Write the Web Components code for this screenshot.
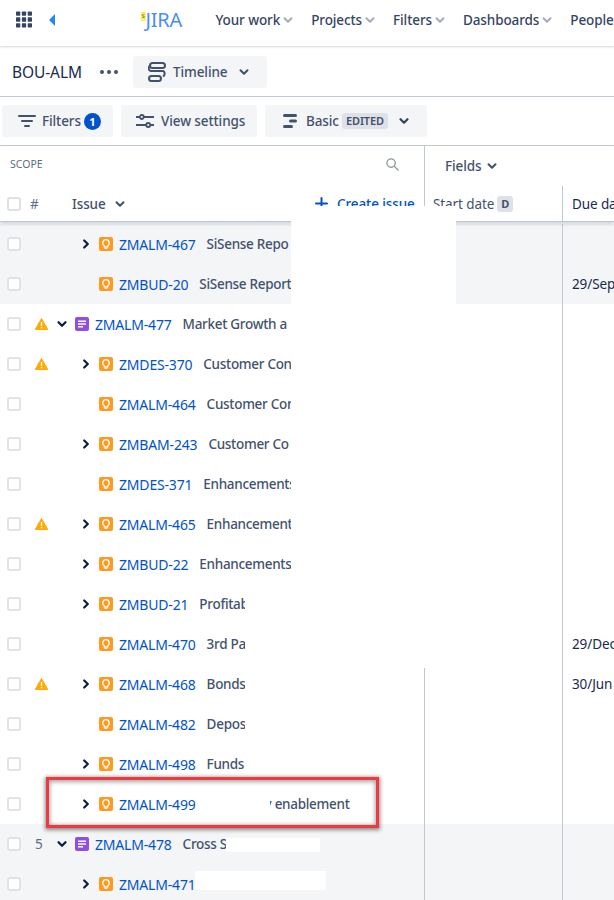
<!DOCTYPE html>
<html>
<head>
<meta charset="utf-8">
<title>Timeline</title>
<style>
    html, body { margin: 0; padding: 0; background: #fff; }
    body { font-family: "Noto Sans", "Open Sans", sans-serif; font-size: 13.5px; letter-spacing: -.1px; color: #42526e; width: 614px; height: 900px; overflow: hidden; }
</style>
</head>
<body>
<timeline-page>
    <top-nav></top-nav>
    <project-bar></project-bar>
    <tool-bar></tool-bar>
    <scope-header></scope-header>

    <issue-row key="ZMALM-467" type="idea" level="1" toggle="right" shade due="">SiSense Repo</issue-row>
    <issue-row key="ZMBUD-20" type="idea" level="1" shade due="29/Sep">SiSense Report</issue-row>
    <issue-row key="ZMALM-477" type="epic" toggle="down" warn>Market Growth a</issue-row>
    <issue-row key="ZMDES-370" type="idea" level="1" toggle="right" warn>Customer Con</issue-row>
    <issue-row key="ZMALM-464" type="idea" level="1">Customer Con</issue-row>
    <issue-row key="ZMBAM-243" type="idea" level="1" toggle="right">Customer Co</issue-row>
    <issue-row key="ZMDES-371" type="idea" level="1">Enhancements</issue-row>
    <issue-row key="ZMALM-465" type="idea" level="1" toggle="right" warn>Enhancement</issue-row>
    <issue-row key="ZMBUD-22" type="idea" level="1" toggle="right">Enhancements</issue-row>
    <issue-row key="ZMBUD-21" type="idea" level="1" toggle="right">Profitab</issue-row>
    <issue-row key="ZMALM-470" type="idea" level="1" due="29/Dec">3rd Pa</issue-row>
    <issue-row key="ZMALM-468" type="idea" level="1" toggle="right" warn due="30/Jun">Bonds</issue-row>
    <issue-row key="ZMALM-482" type="idea" level="1">Depos</issue-row>
    <issue-row key="ZMALM-498" type="idea" level="1" toggle="right">Funds</issue-row>
    <issue-row key="ZMALM-499" type="idea" level="1" toggle="right"><span style="margin-left:58px">y enablement</span></issue-row>
    <issue-row key="ZMALM-478" type="epic" toggle="down" shade count="5">Cross S</issue-row>
    <issue-row key="ZMALM-471" type="idea" level="1" toggle="right" shade></issue-row>

    <!-- white paint-outs from the original screenshot -->
    <redact-box style="left:291px;top:206px;width:165px;height:462px"></redact-box>
    <redact-box style="left:245px;top:590px;width:167px;height:180px"></redact-box>
    <redact-box style="left:195px;top:871px;width:131px;height:19px"></redact-box>
    <redact-box style="left:197px;top:792px;width:73px;height:24px"></redact-box>
    <redact-box style="left:226px;top:838px;width:94px;height:14px"></redact-box>

    <call-out style="left:46px;top:777px;width:333px;height:51px"></call-out>
</timeline-page>

<script>
    const chevron = (size, color, width) => `<svg width="${size}" height="${size}" viewBox="0 0 12 12" fill="none" stroke="${color}" stroke-width="${width}" stroke-linecap="round" stroke-linejoin="round"><path d="M2.5 4.2 6 7.8l3.5-3.6"/></svg>`;

    class TimelinePage extends HTMLElement {
        constructor() {
            super();
            this.attachShadow({ mode: "open" }).innerHTML = `
                <style>
                    :host { display: flex; flex-direction: column; position: relative; width: 614px; height: 900px; overflow: hidden; background: #fff; }
                </style>
                <slot></slot>`;
        }
    }

    class TopNav extends HTMLElement {
        constructor() {
            super();
            const items = ["Your work", "Projects", "Filters", "Dashboards", "People"];
            const links = items.map((name) => `<span class="item">${name}${chevron(12, "#a5adba", 2)}</span>`).join("");
            let dots = "";
            for(let y = 0; y < 3; y++) {
                for(let x = 0; x < 3; x++) {
                    dots += `<rect x="${x * 6}" y="${y * 6}" width="4.4" height="4.4" rx=".7"/>`;
                }
            }
            this.attachShadow({ mode: "open" }).innerHTML = `
                <style>
                    :host { display: flex; align-items: center; height: 46px; flex: none; padding: 0 0 7px 16px; box-sizing: border-box; white-space: nowrap; box-shadow: 0 1px 2px rgba(9, 30, 66, .18); color: #344563; font-weight: 500; position: relative; }
                    svg { display: block; flex: none; }
                    .grid { fill: #344563; }
                    .back { margin-left: 16.5px; }
                    .logo { display: flex; align-items: center; margin-left: 86px; width: 75px; flex: none; font-weight: 400; font-size: 20px; letter-spacing: -.2px; color: #4c8df5; }
                    .logo b { font-size: 6px; font-weight: 400; background: #f7ef6a; color: #6b6b00; width: 5px; height: 9px; line-height: 9px; margin-bottom: 6px; text-align: center; display: block; }
                    .links { display: flex; gap: 17px; flex: none; }
                    .item { display: flex; align-items: center; gap: 2px; }
                </style>
                <svg class="grid" width="16" height="17" viewBox="0 0 16.4 16.4">${dots}</svg>
                <svg class="back" width="6" height="12" viewBox="0 0 6 12"><path d="M6 0v12L0 6z" fill="#2684ff"/></svg>
                <div class="logo"><b>S</b>JIRA</div>
                <div class="links">${links}</div>`;
        }
    }

    class ProjectBar extends HTMLElement {
        constructor() {
            super();
            this.attachShadow({ mode: "open" }).innerHTML = `
                <style>
                    :host { display: flex; align-items: center; height: 51px; flex: none; box-sizing: border-box; border-bottom: 1px solid #c1c7d0; padding: 1px 0 0 12px; }
                    .name { font-size: 15.5px; color: #172b4d; width: 88px; }
                    .more { display: flex; gap: 3px; width: 33px; }
                    .more i { width: 4px; height: 4px; border-radius: 50%; background: #42526e; }
                    .view { display: flex; align-items: center; height: 32px; width: 134px; box-sizing: border-box; padding-left: 15px; background: #f4f5f7; border-radius: 3px; font-weight: 500; color: #42526e; }
                    svg { display: block; flex: none; }
                    .view svg.glyph { margin-right: 7px; }
                    .view span { width: 65px; }
                </style>
                <span class="name">BOU-ALM</span>
                <span class="more"><i></i><i></i><i></i></span>
                <div class="view">
                    <svg class="glyph" width="18" height="20" viewBox="0 0 18 20" fill="none" stroke="#42526e" stroke-width="2"><rect x="2" y="1" width="15" height="5" rx="2.500"/><path d="M2 3.500c-2 2-1.500 5 1 5.500h12c2 .5 2.500 4 0 5.500"/><rect x="1" y="14" width="12" height="5" rx="2.500"/></svg>
                    <span>Timeline</span>
                    ${chevron(12, "#42526e", 2)}
                </div>`;
        }
    }

    class ToolBar extends HTMLElement {
        constructor() {
            super();
            this.attachShadow({ mode: "open" }).innerHTML = `
                <style>
                    :host { display: flex; gap: 8px; align-items: center; height: 49px; flex: none; box-sizing: border-box; border-bottom: 1px solid #c1c7d0; padding-left: 2px; }
                    .btn { display: flex; align-items: center; height: 32px; box-sizing: border-box; background: #f4f5f7; border-radius: 3px; font-weight: 500; color: #42526e; white-space: nowrap; }
                    .count { display: block; width: 17px; height: 17px; line-height: 17px; margin-left: 3px; border-radius: 50%; background: #0052cc; color: #fff; font-size: 11px; font-weight: 700; text-align: center; }
                    .tag { background: #dfe1e6; color: #42526e; font-size: 11px; font-weight: 600; border-radius: 3px; height: 16px; line-height: 16px; padding: 0 4px; margin: 0 10px 0 3px; }
                    svg { display: block; flex: none; }
                </style>
                <div class="btn" style="width:111px;padding-left:16px">
                    <svg width="18" height="12" viewBox="0 0 18 12" fill="#42526e" style="margin-right:6px"><rect width="18" height="2" rx="1"/><rect x="3" y="5" width="12" height="2" rx="1"/><rect x="6" y="10" width="6" height="2" rx="1"/></svg>
                    Filters<span class="count">1</span>
                </div>
                <div class="btn" style="width:136px;padding-left:15px">
                    <svg width="18" height="14" viewBox="0 0 18 14" fill="none" stroke="#42526e" stroke-width="1.800" style="margin-right:7px"><path d="M0 3h3.500M8 3h10M0 11h10M14.500 11H18"/><circle cx="5.800" cy="3" r="2"/><circle cx="12.200" cy="11" r="2"/></svg>
                    View settings
                </div>
                <div class="btn" style="width:162px;padding-left:17px">
                    <svg width="15" height="14" viewBox="0 0 15 14" fill="#42526e" style="margin-right:9px"><rect x="1" width="14" height="3" rx="1.500"/><rect x="7" y="5.500" width="8" height="3" rx="1.500"/><rect x="1" y="11" width="10" height="3" rx="1.500"/></svg>
                    Basic<span class="tag">EDITED</span>
                    ${chevron(12, "#344563", 2.2)}
                </div>`;
        }
    }

    class ScopeHeader extends HTMLElement {
        constructor() {
            super();
            this.attachShadow({ mode: "open" }).innerHTML = `
                <style>
                    :host { display: grid; grid-template-columns: 424px 138px 1fr; grid-template-rows: 40px 35px; height: 76px; margin-bottom: 2px; flex: none; box-sizing: border-box; border-bottom: 1px solid #c1c7d0; box-shadow: 0 2px 3px rgba(9, 30, 66, .2); position: relative; z-index: 1; white-space: nowrap; }
                    svg { display: block; flex: none; }
                    .scope { display: flex; align-items: center; justify-content: space-between; padding: 0 25px 4px 10px; font-size: 10.5px; letter-spacing: 0; color: #5e6c84; }
                    .fields { grid-column: 2 / 4; display: flex; align-items: center; gap: 4px; padding: 0 0 0 20px; border-left: 1px solid #c1c7d0; font-weight: 500; color: #42526e; }
                    .issue { display: flex; align-items: center; padding-left: 7px; position: relative; font-weight: 500; color: #42526e; }
                    .box { width: 14px; height: 14px; box-sizing: border-box; border: 2px solid #dfe1e6; border-radius: 3px; }
                    .hash { width: 42px; margin-left: 9px; color: #5e6c84; font-weight: 400; }
                    .name { width: 42px; }
                    .create { display: flex; align-items: center; gap: 9px; position: absolute; left: 315px; color: #0052cc; }
                    .start { display: flex; align-items: center; padding-left: 8px; border-left: 1px solid #c1c7d0; color: #42526e; }
                    .start b { display: block; width: 16px; height: 16px; line-height: 16px; margin-left: 3px; text-align: center; font-size: 11px; background: #dfe1e6; border-radius: 3px; }
                    .due { display: flex; align-items: center; padding-left: 9px; border-left: 1px solid #c1c7d0; color: #172b4d; }
                </style>
                <div class="scope">
                    SCOPE
                    <svg width="13" height="13" viewBox="0 0 14 14" fill="none" stroke="#8993a4" stroke-width="1.400" stroke-linecap="round"><circle cx="5.500" cy="5.500" r="4.500"/><path d="m9 9 4 4"/></svg>
                </div>
                <div class="fields">Fields ${chevron(12, "#42526e", 2)}</div>
                <div class="issue">
                    <span class="box"></span><span class="hash">#</span><span class="name">Issue</span>${chevron(12, "#42526e", 2)}
                    <span class="create"><svg width="13" height="13" viewBox="0 0 13 13" fill="#0052cc"><rect x="5.500" width="2" height="13" rx="1"/><rect y="5.500" width="13" height="2" rx="1"/></svg>Create issue</span>
                </div>
                <div class="start">Start date <b>D</b></div>
                <div class="due">Due da</div>`;
        }
    }

    class IssueRow extends HTMLElement {
        static get icons() {
            return {
                idea: `<svg width="14" height="14" viewBox="0 0 14 14"><rect width="14" height="14" rx="2" fill="#ff991f"/><path d="M7 2.600a3.300 3.300 0 0 0-1.700 6.100v1.100h3.400V8.700A3.300 3.300 0 0 0 7 2.600z" fill="none" stroke="#fff" stroke-width="1.300"/><rect x="5.500" y="10.500" width="3" height="1.300" fill="#fff"/></svg>`,
                epic: `<svg width="14" height="14" viewBox="0 0 14 14"><rect width="14" height="14" rx="2" fill="#904ee2"/><path d="M3 3.500h8v1.500H3zM3 6.300h8v1.500H3zM3 9.100h5v1.500H3z" fill="#fff"/></svg>`
            };
        }

        constructor() {
            super();
            this.root = this.attachShadow({ mode: "open" });
        }

        connectedCallback() {
            const level = this.getAttribute("level") ? 24 : 0;
            const warn = this.hasAttribute("warn") ? `<svg width="13" height="12" viewBox="0 0 13 12"><path d="M6.500.500 12.800 11.500H.2z" fill="#ffab00" stroke="#ffab00" stroke-linejoin="round"/><path d="M6.500 4v4" stroke="#fff" stroke-width="1.300"/><circle cx="6.500" cy="9.700" r=".8" fill="#fff"/></svg>` : "";
            const count = this.getAttribute("count") || "";
            let toggle = "";
            if(this.getAttribute("toggle") === "down") {
                toggle = `<svg width="12" height="12" viewBox="0 0 12 12" fill="none" stroke="#091e42" stroke-width="2.200" stroke-linecap="round" stroke-linejoin="round"><path d="M2.500 4.200 6 7.800l3.500-3.600"/></svg>`;
            }
            if(this.getAttribute("toggle") === "right") {
                toggle = `<svg width="12" height="12" viewBox="0 0 12 12" fill="none" stroke="#091e42" stroke-width="2.200" stroke-linecap="round" stroke-linejoin="round"><path d="M4.200 2.500 7.800 6l-3.600 3.500"/></svg>`;
            }
            this.root.innerHTML = `
                <style>
                    :host { display: grid; grid-template-columns: 424px 138px 1fr; height: 40px; flex: none; background: #fff; white-space: nowrap; }
                    :host([shade]) { background: #f4f5f7; }
                    .scope { display: flex; align-items: center; padding-left: 7px; overflow: hidden; }
                    .box { width: 14px; height: 14px; flex: none; box-sizing: border-box; border: 2px solid #dfe1e6; border-radius: 3px; background: #fff; opacity: .9; }
                    .flag { display: flex; align-items: center; width: 21px; margin-left: 14px; flex: none; color: #5e6c84; }
                    .toggle { display: flex; width: 12px; margin-left: ${level}px; margin-right: 7px; flex: none; }
                    svg { display: block; flex: none; }
                    .key { margin-left: 6px; font-size: 14px; letter-spacing: -.18px; color: #0052cc; }
                    .title { margin-left: 11px; letter-spacing: -.3px; color: #42526e; font-weight: 500; }
                    .mid { border-left: 1px solid #c1c7d0; }
                    .due { display: flex; align-items: center; padding-left: 9px; border-left: 1px solid #c1c7d0; color: #172b4d; overflow: hidden; }
                </style>
                <div class="scope">
                    <span class="box"></span>
                    <span class="flag">${warn}${count}</span>
                    <span class="toggle">${toggle}</span>
                    ${IssueRow.icons[this.getAttribute("type")]}
                    <span class="key">${this.getAttribute("key")}</span>
                    <span class="title"><slot></slot></span>
                </div>
                <div class="mid"></div>
                <div class="due">${this.getAttribute("due") || ""}</div>`;
        }
    }

    // White patch laid over the content
    class RedactBox extends HTMLElement {
        constructor() {
            super();
            this.attachShadow({ mode: "open" }).innerHTML = `
                <style>:host { display: block; position: absolute; background: #fff; z-index: 2; }</style>`;
        }
    }

    // Red annotation frame
    class CallOut extends HTMLElement {
        constructor() {
            super();
            this.attachShadow({ mode: "open" }).innerHTML = `
                <style>:host { display: block; position: absolute; box-sizing: border-box; border: 3px solid #f0393f; box-shadow: 0 1px 4px 1px rgba(0, 0, 0, .45), inset 0 1px 4px 1px rgba(0, 0, 0, .35); z-index: 3; }</style>`;
        }
    }

    customElements.define("timeline-page", TimelinePage);
    customElements.define("top-nav", TopNav);
    customElements.define("project-bar", ProjectBar);
    customElements.define("tool-bar", ToolBar);
    customElements.define("scope-header", ScopeHeader);
    customElements.define("issue-row", IssueRow);
    customElements.define("redact-box", RedactBox);
    customElements.define("call-out", CallOut);
</script>
</body>
</html>
